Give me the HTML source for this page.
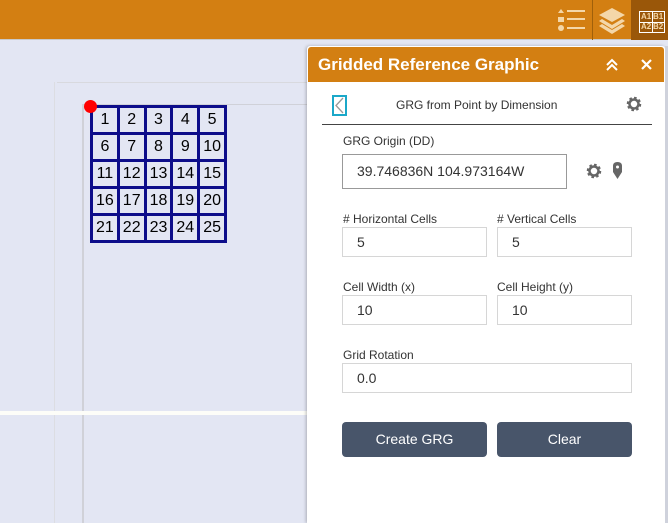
<!DOCTYPE html>
<html><head><meta charset="utf-8"><style>
*{box-sizing:border-box;margin:0;padding:0}
body{width:668px;height:523px;overflow:hidden;background:#e3e6f3;font-family:"Liberation Sans",sans-serif;position:relative}
.abs{position:absolute}
.top{left:0;top:0;width:668px;height:40px;background:#d37f12;border-bottom:1px solid #c9c9c9}
.lbl{position:absolute;font-size:12px;color:#333}
.inp{position:absolute;border:1px solid #d6d6d6;background:#fff;font-size:14px;color:#333;padding-left:14px;line-height:28px}
.btn{position:absolute;background:#48556a;color:#fff;font-size:14px;text-align:center;line-height:35px;border-radius:4px;top:422px;height:35px}
.grid{left:90px;top:105px;width:137px;height:138px;border-collapse:collapse;table-layout:fixed;position:absolute}
.grid td{border:3px solid #0d0d8a;text-align:center;font-size:16px;color:#000;background:#e3e6f3;padding:0}
</style></head><body>
<div class="abs top"></div>
<svg class="abs" style="left:558px;top:8px" width="28" height="24" viewBox="0 0 28 24" fill="#f4d7a8"><polygon points="3,1 6,5 0,5"/><rect x="0" y="9" width="6" height="5"/><circle cx="3" cy="20" r="3"/><rect x="9" y="2" width="18" height="2"/><rect x="9" y="10" width="18" height="2"/><rect x="9" y="19" width="18" height="2"/></svg>
<div class="abs" style="left:592px;top:0;width:1px;height:40px;background:#a0600a"></div>
<svg class="abs" style="left:598px;top:8px" width="28" height="26" viewBox="0 0 28 26" fill="#f4d7a8"><polygon points="14,0 27,7 14,14 1,7"/><polygon points="4,11 14,17 24,11 27,13 14,21 1,13"/><polygon points="4,16 14,22 24,16 27,18 14,26 1,18" /></svg>
<div class="abs" style="left:631px;top:0;width:37px;height:40px;background:#9a5709"></div>
<div class="abs" style="left:639px;top:11px;width:26px;height:22px;border:1px solid #fff;font-size:8px;color:#f4d7a8;line-height:10px;font-weight:bold">
<div style="position:absolute;left:12px;top:0;width:1px;height:20px;background:#fff"></div><div style="position:absolute;left:0;top:10px;width:24px;height:1px;background:#fff"></div>
<span style="position:absolute;left:1px;top:0">A1</span><span style="position:absolute;left:13px;top:0">B1</span><span style="position:absolute;left:1px;top:10px">A2</span><span style="position:absolute;left:13px;top:10px">B2</span></div>
<div class="abs" style="left:57px;top:82px;width:251px;height:1px;background:#d8d9de"></div>
<div class="abs" style="left:54px;top:82px;width:1px;height:441px;background:#dcdde2"></div>
<div class="abs" style="left:83px;top:104px;width:225px;height:1px;background:#d0d1d8"></div>
<div class="abs" style="left:82px;top:104px;width:2px;height:419px;background:#d0d1d8"></div>
<div class="abs" style="left:0;top:411px;width:308px;height:4px;background:#fdfdf8"></div>
<table class="grid">
<tr><td>1</td><td>2</td><td>3</td><td>4</td><td>5</td></tr>
<tr><td>6</td><td>7</td><td>8</td><td>9</td><td>10</td></tr>
<tr><td>11</td><td>12</td><td>13</td><td>14</td><td>15</td></tr>
<tr><td>16</td><td>17</td><td>18</td><td>19</td><td>20</td></tr>
<tr><td>21</td><td>22</td><td>23</td><td>24</td><td>25</td></tr>
</table>
<div class="abs" style="left:84px;top:100px;width:13px;height:13px;border-radius:50%;background:#f00"></div>
<div class="abs" style="left:307px;top:46px;width:358px;height:477px;background:#fff;box-shadow:-1px 0 3px rgba(0,0,0,.25);border-radius:3px 3px 0 0"></div>
<div class="abs" style="left:665px;top:46px;width:3px;height:477px;background:#cfd2dc"></div>
<div class="abs" style="left:308px;top:47px;width:356px;height:35px;background:#d37f12;border-radius:3px 3px 0 0"></div>
<div class="abs" style="left:318px;top:55px;font-size:17px;font-weight:bold;color:#fff">Gridded Reference Graphic</div>
<svg class="abs" style="left:605px;top:58px" width="14" height="13" viewBox="0 0 14 13" fill="none" stroke="#fff" stroke-width="2"><path d="M2 7L7 2L12 7M2 12L7 7L12 12"/></svg>
<svg class="abs" style="left:641px;top:59px" width="11" height="11" viewBox="0 0 11 11" stroke="#fff" stroke-width="2.2"><path d="M1 1L10 10M10 1L1 10"/></svg>
<div class="abs" style="left:332px;top:95px;width:15px;height:21px;border:2px solid #1ba8c9"></div>
<svg class="abs" style="left:334px;top:97px" width="11" height="17" viewBox="0 0 11 17" fill="none" stroke="#999" stroke-width="1.3"><path d="M9 1L2 8.5L9 16"/></svg>
<div class="abs" style="left:396px;top:98px;font-size:12px;color:#333">GRG from Point by Dimension</div>
<svg class="abs" style="left:626px;top:96px" width="16" height="16" viewBox="0 0 16 16"><circle cx="8" cy="8" r="5.5" fill="none" stroke="#666" stroke-width="3.5" stroke-dasharray="2.3 2"/><circle cx="8" cy="8" r="4.5" fill="none" stroke="#666" stroke-width="2.5"/></svg>
<div class="abs" style="left:322px;top:124px;width:330px;height:1px;background:#444"></div>
<div class="lbl" style="left:343px;top:134px">GRG Origin (DD)</div>
<div class="inp" style="left:342px;top:154px;width:225px;height:35px;line-height:33px;border-color:#999">39.746836N 104.973164W</div>
<svg class="abs" style="left:586px;top:163px" width="16" height="16" viewBox="0 0 16 16"><circle cx="8" cy="8" r="5.5" fill="none" stroke="#666" stroke-width="3.5" stroke-dasharray="2.3 2"/><circle cx="8" cy="8" r="4.5" fill="none" stroke="#666" stroke-width="2.5"/></svg>
<svg class="abs" style="left:612px;top:162px" width="11" height="17" viewBox="0 0 11 17"><path d="M5.5 0C2 0 1 2 1 4V10L5.5 17L10 10V4C10 2 9 0 5.5 0Z" fill="#666"/><circle cx="5.5" cy="5" r="1.5" fill="#fff"/></svg>
<div class="lbl" style="left:343px;top:212px"># Horizontal Cells</div>
<div class="lbl" style="left:497px;top:212px"># Vertical Cells</div>
<div class="inp" style="left:342px;top:227px;width:145px;height:30px">5</div>
<div class="inp" style="left:497px;top:227px;width:135px;height:30px">5</div>
<div class="lbl" style="left:343px;top:280px">Cell Width (x)</div>
<div class="lbl" style="left:497px;top:280px">Cell Height (y)</div>
<div class="inp" style="left:342px;top:295px;width:145px;height:30px">10</div>
<div class="inp" style="left:497px;top:295px;width:135px;height:30px">10</div>
<div class="lbl" style="left:343px;top:348px">Grid Rotation</div>
<div class="inp" style="left:342px;top:363px;width:290px;height:30px">0.0</div>
<div class="btn" style="left:342px;width:145px">Create GRG</div>
<div class="btn" style="left:497px;width:135px">Clear</div>
</body></html>
